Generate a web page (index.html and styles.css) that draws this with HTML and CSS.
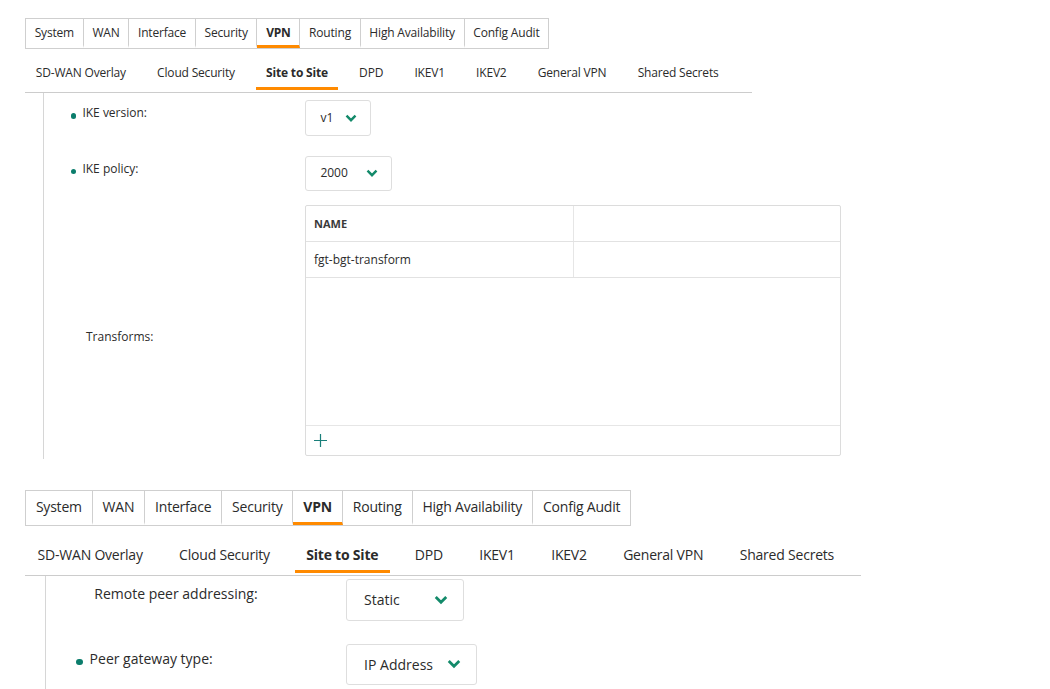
FILE: index.html
```html
<!DOCTYPE html>
<html lang="en">
<head>
    <meta charset="UTF-8">
    <meta name="viewport" content="width=device-width, initial-scale=1.0">
    <title>VPN - Site to Site</title>
    <link rel="stylesheet" href="styles.css">
</head>
<body>
    <!-- IKE settings -->
    <section class="panel panel-small">
        <nav class="tabs">
            <a class="tab">System</a>
            <a class="tab">WAN</a>
            <a class="tab">Interface</a>
            <a class="tab">Security</a>
            <a class="tab active">VPN</a>
            <a class="tab">Routing</a>
            <a class="tab">High Availability</a>
            <a class="tab">Config Audit</a>
        </nav>
        <nav class="subtabs subtabs-small">
            <a class="subtab">SD-WAN Overlay</a>
            <a class="subtab">Cloud Security</a>
            <a class="subtab active">Site to Site</a>
            <a class="subtab">DPD</a>
            <a class="subtab">IKEV1</a>
            <a class="subtab">IKEV2</a>
            <a class="subtab">General VPN</a>
            <a class="subtab">Shared Secrets</a>
        </nav>
        <div class="form">
            <div class="form-row">
                <label class="label required">IKE version:</label>
                <div class="select"><span class="select-value">v1</span><svg class="chevron" viewBox="0 0 12 8"><polyline points="1.5,1.5 6,6 10.5,1.5"/></svg></div>
            </div>
            <div class="form-row">
                <label class="label required">IKE policy:</label>
                <div class="select"><span class="select-value select-value-policy">2000</span><svg class="chevron" viewBox="0 0 12 8"><polyline points="1.5,1.5 6,6 10.5,1.5"/></svg></div>
            </div>
            <div class="form-row form-row-table">
                <label class="label label-middle">Transforms:</label>
                <div class="grid">
                    <div class="grid-head">
                        <div class="cell">NAME</div>
                        <div class="cell"></div>
                    </div>
                    <div class="grid-row">
                        <div class="cell">fgt-bgt-transform</div>
                        <div class="cell"></div>
                    </div>
                    <div class="grid-body"></div>
                    <div class="grid-foot">
                        <svg class="plus" viewBox="0 0 14 14"><path d="M7 0V14M0 7H14"/></svg>
                    </div>
                </div>
            </div>
        </div>
    </section>

    <!-- peer settings -->
    <section class="panel panel-large">
        <nav class="tabs">
            <a class="tab">System</a>
            <a class="tab">WAN</a>
            <a class="tab">Interface</a>
            <a class="tab">Security</a>
            <a class="tab active">VPN</a>
            <a class="tab">Routing</a>
            <a class="tab">High Availability</a>
            <a class="tab">Config Audit</a>
        </nav>
        <nav class="subtabs subtabs-large">
            <a class="subtab">SD-WAN Overlay</a>
            <a class="subtab">Cloud Security</a>
            <a class="subtab active">Site to Site</a>
            <a class="subtab">DPD</a>
            <a class="subtab">IKEV1</a>
            <a class="subtab">IKEV2</a>
            <a class="subtab">General VPN</a>
            <a class="subtab">Shared Secrets</a>
        </nav>
        <div class="form form-open">
            <div class="form-row">
                <label class="label">Remote peer addressing:</label>
                <div class="select"><span class="select-value select-value-wide">Static</span><svg class="chevron" viewBox="0 0 12 8"><polyline points="1.5,1.5 6,6 10.5,1.5"/></svg></div>
            </div>
            <div class="form-row">
                <label class="label required">Peer gateway type:</label>
                <div class="select"><span class="select-value">IP Address</span><svg class="chevron" viewBox="0 0 12 8"><polyline points="1.5,1.5 6,6 10.5,1.5"/></svg></div>
            </div>
        </div>
    </section>
</body>
</html>
```

FILE: styles.css
```css
/* base */
* {
    margin: 0;
    padding: 0;
    box-sizing: border-box;
}

body {
    font-family: 'Open Sans', 'Liberation Sans', sans-serif;
    color: #2b2b2b;
    background: #fff;
    padding: 18px 0 0 25px;
    overflow: hidden;
}

.panel-small {
    font-size: 12px;
    margin-bottom: 31px;
}

.panel-large {
    font-size: 14px;
}

/* top tab bar */
.tabs {
    display: inline-flex;
    border: 1px solid #cfcfcf;
}

.tab {
    display: block;
    height: 2.42em;
    line-height: 2.35em;
    padding: 0 calc(0.6em + 1.5px);
    border-right: 1px solid #cfcfcf;
    border-bottom: 3px solid transparent;
    letter-spacing: -0.015em;
    white-space: nowrap;
}

.tab:last-child {
    border-right: none;
}

.tab.active {
    font-weight: 700;
    border-bottom-color: #ff8a00;
}

/* second level tabs */
.subtabs {
    display: flex;
    gap: 1em;
    padding: 0 0 2px 0.1em;
    border-bottom: 1px solid #cccccc;
}

.subtabs-small {
    width: 727px;
}

.subtabs-large {
    width: 836px;
}

.subtab {
    display: block;
    padding: 1.35em 0.8em 0.43em;
    line-height: 1.4;
    border-bottom: 3px solid transparent;
    letter-spacing: -0.015em;
    white-space: nowrap;
}

.subtab.active {
    font-weight: 700;
    border-bottom-color: #ff8a00;
}

/* form */
.form {
    margin-left: 1.5em;
    border-left: 1px solid #d6d6d6;
    padding: 0.6em 0 3px;
}

.form-open {
    margin-left: 1.45em;
    padding-top: 3px;
    height: 114px;
}

.form-row {
    display: flex;
    align-items: flex-start;
}

.form-row + .form-row {
    margin-top: 1.65em;
}

.form-row.form-row-table {
    margin-top: 1.15em;
    align-items: center;
}

.label {
    flex: 0 0 calc(19.5em + 27px);
    padding: 5px 0 0 calc(3em + 6px);
    line-height: 1.4;
}

.label.required {
    padding-left: calc(1.5em + 9px);
}

.label.required::before {
    content: '';
    display: inline-block;
    width: 0.45em;
    height: 0.45em;
    margin-right: 0.5em;
    border-radius: 50%;
    background: #0b7d6c;
    vertical-align: -0.1em;
}

.label-middle {
    padding-top: 1.2em;
}

/* dropdown */
.select {
    display: inline-flex;
    align-items: center;
    border: 1px solid #dedede;
    border-radius: 3px;
    padding: 0.7em 1.1em 0.7em 1.2em;
    line-height: 1.4;
}

.select-value {
    margin-right: 1em;
}

.select-value-policy {
    margin-right: 1.5em;
}

.select-value-wide {
    min-width: 4em;
}

.chevron {
    width: 1em;
    height: 0.7em;
    fill: none;
    stroke: #138a6a;
    stroke-width: 2.4;
}

/* transforms grid */
.grid {
    width: 536px;
    border: 1px solid #dcdcdc;
    border-radius: 2px;
}

.grid-head,
.grid-row {
    display: flex;
    height: 36px;
    border-bottom: 1px solid #e2e2e2;
}

.cell {
    flex: 1;
    padding: 0 8px;
    line-height: 35px;
}

.cell + .cell {
    border-left: 1px solid #e6e6e6;
}

.grid-head .cell {
    font-weight: 700;
    font-size: 11px;
    color: #3a3a3a;
}

.grid-body {
    height: 148px;
    border-bottom: 1px solid #e6e6e6;
}

.grid-foot {
    height: 29px;
    display: flex;
    align-items: center;
    padding-left: 8px;
}

.plus {
    width: 13px;
    height: 13px;
    stroke: #1a7f7a;
    stroke-width: 1.3;
}
```
